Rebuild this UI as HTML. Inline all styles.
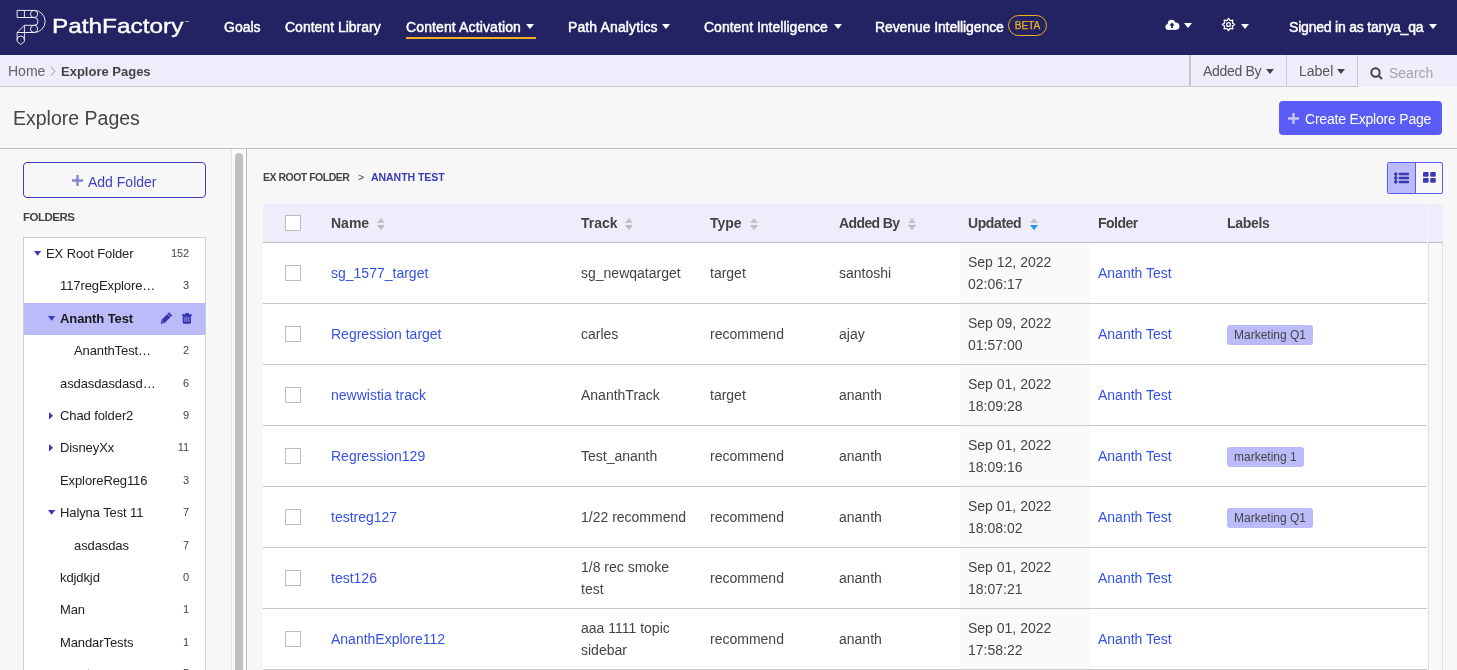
<!DOCTYPE html>
<html><head><meta charset="utf-8">
<style>
*{box-sizing:border-box;margin:0;padding:0}
html,body{width:1457px;height:670px;overflow:hidden;will-change:transform;background:#f7f7f7;font-family:"Liberation Sans",sans-serif;color:#444}
.abs{position:absolute;white-space:nowrap}
#hdr{position:absolute;left:0;top:0;width:1457px;height:55px;background:#232262}
.nav{position:absolute;top:19px;font-size:14px;color:#fff;line-height:16px;white-space:nowrap;-webkit-text-stroke:0.45px #fff}
.caret{display:inline-block;width:0;height:0;border-left:4px solid transparent;border-right:4px solid transparent;border-top:5px solid #fff;position:absolute}
#sub{position:absolute;left:0;top:55px;width:1457px;height:32px;background:#eeedfc;border-bottom:1px solid #cacaca}

#title{position:absolute;left:13px;top:106px;font-size:19.5px;color:#444;line-height:24px}
#create{position:absolute;left:1279px;top:101px;width:163px;height:34px;background:#5a5cf7;border-radius:4px;color:#fff;font-size:14px}
#hline{position:absolute;left:0;top:148px;width:1457px;height:1px;background:#bfbfbf}
#addf{position:absolute;left:23px;top:162px;width:183px;height:36px;border:1px solid #3f3fbf;border-radius:4px;color:#3f3fbf;font-size:14px}
#folders{position:absolute;left:23px;top:210px;font-size:11.5px;letter-spacing:-0.5px;font-weight:bold;color:#444;line-height:14px}
#tree{position:absolute;left:23px;top:237px;width:183px;height:440px;background:#fff;border:1px solid #cfcfcf}
.tr{position:absolute;left:0;width:181px;height:32px;font-size:13px;letter-spacing:-0.1px;color:#222;line-height:16px}
.tr .t{position:absolute;top:8px;white-space:nowrap}
.tr .c{position:absolute;right:16px;top:7px;font-size:11px;color:#444}
.tc{position:absolute;top:13px;width:0;height:0;border-left:3.6px solid transparent;border-right:3.6px solid transparent;border-top:4.8px solid #3838c0}
.tcr{position:absolute;top:10.5px;width:0;height:0;border-top:3.6px solid transparent;border-bottom:3.6px solid transparent;border-left:4.6px solid #3838c0}
#sbtrack{position:absolute;left:231px;top:149px;width:16px;height:521px;background:#fafafa;border-left:1px solid #e6e6e6;border-right:1px solid #b9b9b9}
#sbthumb{position:absolute;left:235px;top:153px;width:8px;height:530px;background:#c1c1c1;border-radius:4px}
#crumb{position:absolute;left:263px;top:171px;font-size:10.5px;letter-spacing:-0.2px;font-weight:bold;line-height:13px;white-space:nowrap}
#vt{position:absolute;left:1387px;top:162px;width:56px;height:32px;border:1px solid #5a5cf7;border-radius:2px;overflow:hidden}
#thead{position:absolute;left:263px;top:204px;width:1164px;height:39px;background:#eeedfc;border-bottom:1px solid #bdbdbd}
#thead2{position:absolute;left:1428px;top:204px;width:15px;height:39px;background:#eeedfc;border-bottom:1px solid #bdbdbd}
.th{position:absolute;top:11px;font-size:14px;font-weight:bold;color:#444;line-height:16px;white-space:nowrap}
.srt{position:absolute;top:0;width:8px;height:12px}
.cb{position:absolute;left:22px;width:16px;height:16px;background:#fff;border:1px solid #bdbdbd}
#tbody{position:absolute;left:263px;top:243px;width:1164px;height:440px;background:#fff}
#tb2{position:absolute;left:1428px;top:243px;width:15px;height:440px;background:#fafafa;border-left:1px solid #e2e2e2;border-right:1px solid #e2e2e2}
.row{position:absolute;left:0;width:1164px;height:61px;border-bottom:1px solid #c8c8c8;font-size:14px;color:#444;line-height:22px}
.row .upd{position:absolute;left:697px;top:0;width:130px;height:60px;background:#fafafa}
.row .d{position:absolute;white-space:nowrap}
.lnk{color:#3452e6}
.badge{position:absolute;left:964px;top:21px;height:20px;padding:0 7px;background:#bbbbfa;border-radius:3px;font-size:12px;color:#444;line-height:20px}
</style></head><body>
<div id="hdr">
  <svg class="abs" style="left:14px;top:8px" width="36" height="40" viewBox="14 8 36 40" fill="none" stroke="#e8e8f0" stroke-width="1">
    <path d="M17.1 10.4 H34.1 A11.05 11.05 0 0 1 34.1 32.5 H17.1"/>
    <path d="M17.1 10.4 V17.5 H34.1 A3.9 3.9 0 0 1 34.1 25.3 H24.4 L17.1 32.5 V41.5 L20.75 44.4 L24.4 41.5 V25.3"/>
    <path d="M24.4 10.4 V17.5"/>
    <circle cx="34.1" cy="14" r="3.6"/>
    <circle cx="34.1" cy="28.9" r="3.6"/>
    <path d="M17.1 39.7 A3.65 3.65 0 0 1 24.4 39.7"/>
  </svg>
  <div class="abs" style="left:52px;top:14px;font-size:21px;color:#fff;line-height:24px;-webkit-text-stroke:0.4px #fff;transform:scaleX(1.16);transform-origin:0 0">PathFactory</div><div class="abs" style="left:185px;top:21px;width:4px;height:1px;background:#9a9ab8"></div>
  <div class="nav" style="left:224px">Goals</div>
  <div class="nav" style="left:285px">Content Library</div>
  <div class="nav" style="left:406px;letter-spacing:0.12px">Content Activation</div>
  <i class="caret" style="left:526px;top:24px"></i>
  <div class="abs" style="left:406px;top:37px;width:130px;height:2px;background:#f5b01e"></div>
  <div class="nav" style="left:568px;letter-spacing:0.12px">Path Analytics</div>
  <i class="caret" style="left:662px;top:24px"></i>
  <div class="nav" style="left:704px">Content Intelligence</div>
  <i class="caret" style="left:834px;top:24px"></i>
  <div class="nav" style="left:875px;letter-spacing:-0.1px">Revenue Intelligence</div>
  <div class="abs" style="left:1008px;top:15px;width:39px;height:21px;border:1px solid #f0b020;border-radius:11px;color:#f0b020;font-size:10px;line-height:19px;text-align:center;-webkit-text-stroke:0.25px #f0b020">BETA</div>
  
  <svg class="abs" style="left:1160px;top:14px" width="25" height="20" viewBox="1160 14 25 20"><g fill="#fff"><circle cx="1171.6" cy="23.6" r="3.8"/><circle cx="1175.8" cy="26.2" r="3.6"/><circle cx="1168.3" cy="26.9" r="2.9"/><rect x="1168.3" y="24" width="7.5" height="5.8"/></g><path d="M1169.3 25.4 L1172 22.5 L1174.7 25.4 Z M1171.05 25 H1172.95 V27.9 H1171.05 Z" fill="#232262"/></svg>
  <svg class="abs" style="left:1221px;top:17px" width="15" height="15" viewBox="0 0 15 15" fill="none" stroke="#fff" stroke-width="1.3" stroke-linejoin="round"><path d="M7.50 1.40 L9.11 3.62 L11.81 3.19 L11.38 5.89 L13.60 7.50 L11.38 9.11 L11.81 11.81 L9.11 11.38 L7.50 13.60 L5.89 11.38 L3.19 11.81 L3.62 9.11 L1.40 7.50 L3.62 5.89 L3.19 3.19 L5.89 3.62 Z"/><circle cx="7.5" cy="7.5" r="1.9"/></svg>
<i class="caret" style="left:1184px;top:23px"></i>
  <i class="caret" style="left:1241px;top:24px"></i>
  <div class="nav" style="left:1289px;letter-spacing:-0.2px">Signed in as tanya_qa</div>
  <i class="caret" style="left:1429px;top:24px"></i>
</div>
<div id="sub">
  <div class="abs" style="left:8px;top:8px;font-size:14px;color:#666;line-height:16px">Home</div>
  <svg class="abs" style="left:48px;top:9px" width="10" height="14" viewBox="48 64 10 14"><path d="M51 66.8 L55 71.2 L51 75.6" fill="none" stroke="#9a9a9a" stroke-width="1"/></svg>
  <div class="abs" style="left:61px;top:9px;font-size:13px;color:#444;font-weight:bold;line-height:16px">Explore Pages</div>

  <div class="abs" style="left:1189px;top:0;width:2px;height:31px;background:#c8c8c8"></div>
  <div class="abs" style="left:1203px;top:8px;font-size:14px;color:#555;line-height:16px;letter-spacing:-0.3px">Added By</div>
  <i class="caret" style="left:1266px;top:14px;border-top-color:#444"></i>
  <div class="abs" style="left:1286px;top:0;width:1px;height:31px;background:#cacaca"></div>
  <div class="abs" style="left:1299px;top:8px;font-size:14px;color:#555;line-height:16px">Label</div>
  <i class="caret" style="left:1337px;top:14px;border-top-color:#444"></i>
  <div class="abs" style="left:1357px;top:0;width:100px;height:32px;background:#efeefd;border-left:1px solid #cacaca"></div>
  <svg class="abs" style="left:1370px;top:12px" width="13" height="13" viewBox="0 0 13 13" fill="none" stroke="#444" stroke-width="2"><circle cx="5.5" cy="5.5" r="4.2"/><path d="M8.6 8.6 L12 12"/></svg>
  <div class="abs" style="left:1389px;top:10px;font-size:14px;color:#a5a5a5;line-height:16px">Search</div>
</div>

<div id="title">Explore Pages</div>
<div id="create">
  <svg class="abs" style="left:9px;top:12px" width="11" height="11" viewBox="0 0 11 11"><path d="M5.5 0V11M0 5.5H11" stroke="#c5c5ff" stroke-width="2.4"/></svg>
  <div class="abs" style="left:26px;top:10px;line-height:16px;letter-spacing:-0.2px">Create Explore Page</div>
</div>
<div id="hline"></div>
<div id="addf">
  <svg class="abs" style="left:48px;top:12px" width="11" height="11" viewBox="0 0 11 11"><path d="M5.5 0V11M0 5.5H11" stroke="#8585d6" stroke-width="2.4"/></svg>
  <div class="abs" style="left:64px;top:11px;line-height:16px">Add Folder</div>
</div>
<div id="folders">FOLDERS</div>
<div id="tree">
  <div class="tr" style="top:0"><svg class="abs" style="left:10px;top:13px" width="8" height="5" viewBox="0 0 8 5"><path d="M0 0 H7.2 L3.6 4.8 Z" fill="#3838c0"/></svg><span class="t" style="left:22px">EX Root Folder</span><span class="c">152</span></div>
  <div class="tr" style="top:32px"><span class="t" style="left:36px">117regExplore…</span><span class="c">3</span></div>
  <div class="tr" style="top:65px;background:#bbbbfa;height:32px"><svg class="abs" style="left:24px;top:13px" width="8" height="5" viewBox="0 0 8 5"><path d="M0 0 H7.2 L3.6 4.8 Z" fill="#3838c0"/></svg><span class="t" style="left:36px;font-weight:bold;color:#1a1a1a">Ananth Test</span>
    <svg class="abs" style="left:131px;top:5px" width="43" height="22" viewBox="155 308 43 22">
      <path d="M163.3 321.2 L170.6 313.9" stroke="#3535b5" stroke-width="4.4"/>
      <path d="M166.6 313.2 L171.3 317.9" stroke="#bbbbfa" stroke-width="0.7"/>
      <path d="M161.67 319.57 L164.93 322.83 L160.7 324 Z" fill="#3535b5"/>
      <path d="M161.9 321.3 L162.8 322.2" stroke="#c8c8fb" stroke-width="0.9"/>
      <rect x="185.2" y="312.9" width="3.9" height="2" rx="0.8" fill="#3535b5"/>
      <rect x="181.9" y="314.2" width="9.9" height="1.8" rx="0.5" fill="#3535b5"/>
      <path d="M182.7 315.9 H190.9 V322.6 Q190.9 323.8 189.7 323.8 H183.9 Q182.7 323.8 182.7 322.6 Z" fill="#3535b5"/>
      <rect x="184.3" y="317" width="1.1" height="4.7" fill="#8a8ae0"/>
      <rect x="186.25" y="317" width="1.1" height="4.7" fill="#8a8ae0"/>
      <rect x="188.2" y="317" width="1.1" height="4.7" fill="#8a8ae0"/>
    </svg>
  </div>
  <div class="tr" style="top:97px"><span class="t" style="left:50px">AnanthTest…</span><span class="c">2</span></div>
  <div class="tr" style="top:130px"><span class="t" style="left:36px">asdasdasdasd…</span><span class="c">6</span></div>
  <div class="tr" style="top:162px"><svg class="abs" style="left:25px;top:11.5px" width="5" height="8" viewBox="0 0 5 8"><path d="M0 0 L4.1 3.7 L0 7.4 Z" fill="#3838c0"/></svg><span class="t" style="left:36px">Chad folder2</span><span class="c">9</span></div>
  <div class="tr" style="top:194px"><svg class="abs" style="left:25px;top:11.5px" width="5" height="8" viewBox="0 0 5 8"><path d="M0 0 L4.1 3.7 L0 7.4 Z" fill="#3838c0"/></svg><span class="t" style="left:36px">DisneyXx</span><span class="c">11</span></div>
  <div class="tr" style="top:227px"><span class="t" style="left:36px">ExploreReg116</span><span class="c">3</span></div>
  <div class="tr" style="top:259px"><svg class="abs" style="left:24px;top:13px" width="8" height="5" viewBox="0 0 8 5"><path d="M0 0 H7.2 L3.6 4.8 Z" fill="#3838c0"/></svg><span class="t" style="left:36px">Halyna Test 11</span><span class="c">7</span></div>
  <div class="tr" style="top:292px"><span class="t" style="left:50px">asdasdas</span><span class="c">7</span></div>
  <div class="tr" style="top:324px"><span class="t" style="left:36px">kdjdkjd</span><span class="c">0</span></div>
  <div class="tr" style="top:356px"><span class="t" style="left:36px">Man</span><span class="c">1</span></div>
  <div class="tr" style="top:389px"><span class="t" style="left:36px">MandarTests</span><span class="c">1</span></div>
  <div class="tr" style="top:420px"><span class="t" style="left:36px">new team</span><span class="c">5</span></div>
</div>
<div id="sbtrack"></div>
<div id="sbthumb"></div>
<div id="crumb"><span class="abs" style="left:0;top:0;color:#444;letter-spacing:-0.5px">EX ROOT FOLDER</span><span class="abs" style="left:95px;top:0;color:#444;font-weight:normal;font-size:10.5px">&gt;</span><span class="abs" style="left:108px;top:0;color:#3a3ab8;letter-spacing:-0.05px">ANANTH TEST</span></div>
<div id="vt">
  <div class="abs" style="left:0;top:0;width:28px;height:30px;background:#bbbbfa;border-right:1px solid #5a5cf7"></div>
  <svg class="abs" style="left:6px;top:9px" width="16" height="13" viewBox="0 0 16 13" fill="#3a3ab0"><circle cx="1.8" cy="2" r="1.8"/><circle cx="1.8" cy="6" r="1.8"/><circle cx="1.8" cy="10" r="1.8"/><rect x="1.1" y="2" width="1.4" height="8"/><rect x="4.8" y="0.8" width="10.2" height="2.4" rx="0.6"/><rect x="4.8" y="4.8" width="10.2" height="2.4" rx="0.6"/><rect x="4.8" y="8.8" width="10.2" height="2.4" rx="0.6"/></svg>
  <svg class="abs" style="left:35px;top:9px" width="13" height="11" viewBox="0 0 13 11" fill="#3a3ab0"><rect x="0" y="0" width="5.6" height="4.8" rx="1"/><rect x="7.2" y="0" width="5.6" height="4.8" rx="1"/><rect x="0" y="6" width="5.6" height="4.8" rx="1"/><rect x="7.2" y="6" width="5.6" height="4.8" rx="1"/></svg>
</div>
<div id="thead">
  <div class="cb" style="top:11px"></div>
  <div class="th" style="left:68px">Name</div><svg class="abs" style="left:114px;top:14px" width="8" height="13" viewBox="0 0 8 13"><path d="M4 0 L8 5 H0 Z" fill="#c4c4c4"/><path d="M0 7 H8 L4 12.2 Z" fill="#bdbdbd"/></svg>
  <div class="th" style="left:318px">Track</div><svg class="abs" style="left:362px;top:14px" width="8" height="13" viewBox="0 0 8 13"><path d="M4 0 L8 5 H0 Z" fill="#c4c4c4"/><path d="M0 7 H8 L4 12.2 Z" fill="#bdbdbd"/></svg>
  <div class="th" style="left:447px">Type</div><svg class="abs" style="left:487px;top:14px" width="8" height="13" viewBox="0 0 8 13"><path d="M4 0 L8 5 H0 Z" fill="#c4c4c4"/><path d="M0 7 H8 L4 12.2 Z" fill="#bdbdbd"/></svg>
  <div class="th" style="left:576px;letter-spacing:-0.6px">Added By</div><svg class="abs" style="left:645px;top:14px" width="8" height="13" viewBox="0 0 8 13"><path d="M4 0 L8 5 H0 Z" fill="#c4c4c4"/><path d="M0 7 H8 L4 12.2 Z" fill="#bdbdbd"/></svg>
  <div class="th" style="left:705px;letter-spacing:-0.4px">Updated</div><svg class="abs" style="left:767px;top:14px" width="8" height="13" viewBox="0 0 8 13"><path d="M4 0 L8 5 H0 Z" fill="#c4c4c4"/><path d="M0 7 H8 L4 12.2 Z" fill="#2196f3"/></svg>
  <div class="th" style="left:835px;letter-spacing:-0.5px">Folder</div>
  <div class="th" style="left:964px;letter-spacing:-0.3px">Labels</div>
</div>
<div id="thead2"></div>
<div id="tbody">
  <div class="row" style="top:0"><div class="cb" style="top:22px"></div><div class="upd"></div>
    <div class="d lnk" style="left:68px;top:19px">sg_1577_target</div><div class="d" style="left:318px;top:19px">sg_newqatarget</div><div class="d" style="left:447px;top:19px">target</div><div class="d" style="left:576px;top:19px">santoshi</div>
    <div class="d" style="left:705px;top:8px">Sep 12, 2022<br>02:06:17</div><div class="d lnk" style="left:835px;top:19px">Ananth Test</div></div>
  <div class="row" style="top:61px"><div class="cb" style="top:22px"></div><div class="upd"></div>
    <div class="d lnk" style="left:68px;top:19px">Regression target</div><div class="d" style="left:318px;top:19px">carles</div><div class="d" style="left:447px;top:19px">recommend</div><div class="d" style="left:576px;top:19px">ajay</div>
    <div class="d" style="left:705px;top:8px">Sep 09, 2022<br>01:57:00</div><div class="d lnk" style="left:835px;top:19px">Ananth Test</div><div class="badge">Marketing Q1</div></div>
  <div class="row" style="top:122px"><div class="cb" style="top:22px"></div><div class="upd"></div>
    <div class="d lnk" style="left:68px;top:19px">newwistia track</div><div class="d" style="left:318px;top:19px">AnanthTrack</div><div class="d" style="left:447px;top:19px">target</div><div class="d" style="left:576px;top:19px">ananth</div>
    <div class="d" style="left:705px;top:8px">Sep 01, 2022<br>18:09:28</div><div class="d lnk" style="left:835px;top:19px">Ananth Test</div></div>
  <div class="row" style="top:183px"><div class="cb" style="top:22px"></div><div class="upd"></div>
    <div class="d lnk" style="left:68px;top:19px">Regression129</div><div class="d" style="left:318px;top:19px">Test_ananth</div><div class="d" style="left:447px;top:19px">recommend</div><div class="d" style="left:576px;top:19px">ananth</div>
    <div class="d" style="left:705px;top:8px">Sep 01, 2022<br>18:09:16</div><div class="d lnk" style="left:835px;top:19px">Ananth Test</div><div class="badge">marketing 1</div></div>
  <div class="row" style="top:244px"><div class="cb" style="top:22px"></div><div class="upd"></div>
    <div class="d lnk" style="left:68px;top:19px">testreg127</div><div class="d" style="left:318px;top:19px">1/22 recommend</div><div class="d" style="left:447px;top:19px">recommend</div><div class="d" style="left:576px;top:19px">ananth</div>
    <div class="d" style="left:705px;top:8px">Sep 01, 2022<br>18:08:02</div><div class="d lnk" style="left:835px;top:19px">Ananth Test</div><div class="badge">Marketing Q1</div></div>
  <div class="row" style="top:305px"><div class="cb" style="top:22px"></div><div class="upd"></div>
    <div class="d lnk" style="left:68px;top:19px">test126</div><div class="d" style="left:318px;top:8px">1/8 rec smoke<br>test</div><div class="d" style="left:447px;top:19px">recommend</div><div class="d" style="left:576px;top:19px">ananth</div>
    <div class="d" style="left:705px;top:8px">Sep 01, 2022<br>18:07:21</div><div class="d lnk" style="left:835px;top:19px">Ananth Test</div></div>
  <div class="row" style="top:366px"><div class="cb" style="top:22px"></div><div class="upd"></div>
    <div class="d lnk" style="left:68px;top:19px">AnanthExplore112</div><div class="d" style="left:318px;top:8px">aaa 1111 topic<br>sidebar</div><div class="d" style="left:447px;top:19px">recommend</div><div class="d" style="left:576px;top:19px">ananth</div>
    <div class="d" style="left:705px;top:8px">Sep 01, 2022<br>17:58:22</div><div class="d lnk" style="left:835px;top:19px">Ananth Test</div></div>
</div>
<div id="tb2"></div>
</body></html>
